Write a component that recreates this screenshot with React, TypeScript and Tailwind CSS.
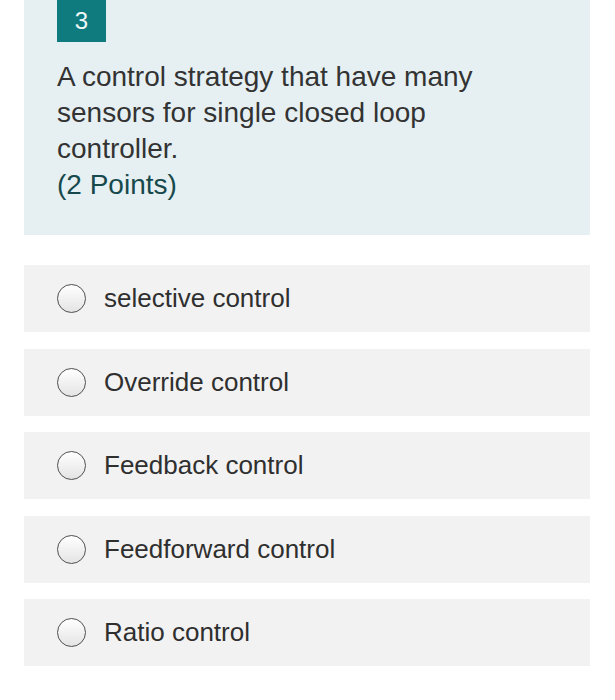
const options = [
  "selective control",
  "Override control",
  "Feedback control",
  "Feedforward control",
  "Ratio control",
];

const Radio = () => (
  <span className="flex size-[29px] shrink-0 rounded-full border-[1.5px] border-[#505050] bg-gradient-to-b from-white to-[#e4e4e4]" />
);

export default function App() {
  return (
    <div
      className="w-[615px] h-[700px] bg-white"
      style={{ fontFamily: '"Liberation Sans", Arial, sans-serif' }}
    >
      <div className="ml-6 w-[566px]">
        <div className="h-[235px] bg-[#e6f0f2] pl-[33px]">
          <div className="flex w-[49px] h-[42px] items-center justify-center bg-[#0f7b7f] text-[24px] text-[#eef6f6]">
            3
          </div>
          <p className="mt-[17px] max-w-[450px] text-[28px] leading-[36px] text-[#333333]">
            A control strategy that have many sensors for single closed loop
            controller.
          </p>
          <p className="text-[28px] leading-[36px] text-[#17494c]">
            (2 Points)
          </p>
        </div>
        <div className="mt-[30px] flex flex-col gap-[16.5px]">
          {options.map((label) => (
            <div
              key={label}
              className="flex h-[67px] items-center gap-[18px] bg-[#f2f2f2] pl-[33px]"
            >
              <Radio />
              <span className="text-[26px] text-[#2f2f2f]">{label}</span>
            </div>
          ))}
        </div>
      </div>
    </div>
  );
}
